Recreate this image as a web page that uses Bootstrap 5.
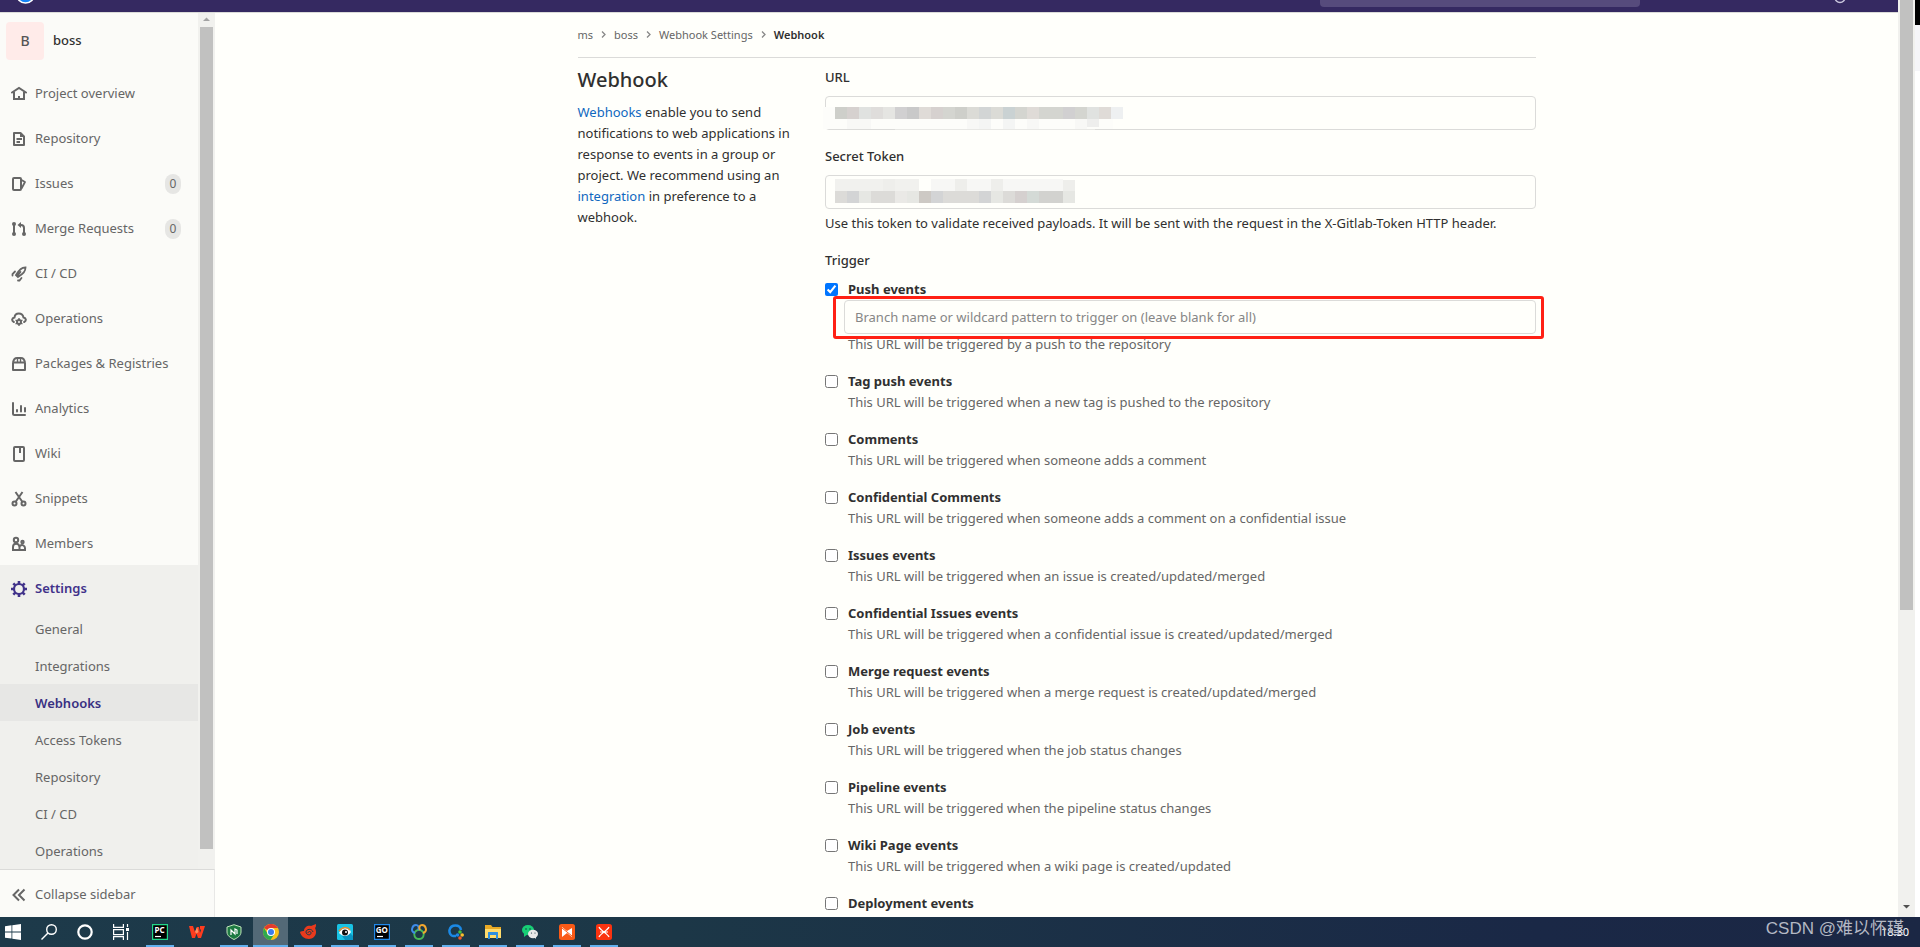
<!DOCTYPE html>
<html lang="en">
<head>
<meta charset="utf-8">
<meta name="viewport" content="width=device-width, initial-scale=1">
<title>Webhook · Settings · boss</title>
<link rel="stylesheet" href="https://cdn.jsdelivr.net/npm/bootstrap@5.3.0/dist/css/bootstrap.min.css">
<style>
:root{--line:#dbdbd9;--ink:#303030;--muted-ink:#666;--page:#fffffb;--side:#fbfbf8;--track:#f1f1ee;--thumb:#c1c1c0;--accent:#41328a}
body{font-family:"Noto Sans","Open Sans",sans-serif;font-size:13px;line-height:21px;color:var(--ink);background:var(--page)}
a{text-decoration:none}
.topbar{height:13px;background:#352961;border-bottom:1px solid var(--line)}
.search-box{width:320px;height:7px;margin-right:193px;border-radius:0 0 4px 4px;background:#564b7c}
.sidebar{width:215px;background:var(--side)}
.project-link{height:57px;padding:0 6px 2px;gap:9px;color:var(--ink);font-weight:500}
.project-mark{width:38px;height:38px;border-radius:4px;background:#ffebe9;color:#555;font-size:14px}
.side-link{height:45px;padding:2px 17px 0 11px;gap:8px;color:var(--muted-ink)}
.side-link svg,.collapse-btn svg{width:16px;height:16px;flex:none}
.count-pill{min-width:16px;height:20px;border-radius:10px;background:#e6e6e4;font-size:12px;line-height:20px;text-align:center;color:var(--muted-ink)}
.settings-group{background:#f0f0ed}
.settings-group .side-link{color:var(--accent);font-weight:600}
.sub-link{height:37px;padding:2px 0 0 35px;color:var(--muted-ink)}
.sub-link.current{background:#e7e7e5;color:#393082;font-weight:600}
.track{width:17px;background:var(--track)}
.track svg{width:17px;height:14px;flex:none}
.thumb{width:13px;background:var(--thumb)}
.side-thumb{height:97.6%}
.page-thumb{height:66.5%}
.collapse-btn{height:48px;padding:2px 11px 0;gap:8px;border:0;border-top:1px solid var(--line);border-right:1px solid #e8e8e6;background:var(--side);color:var(--muted-ink);text-align:left}
.content-wrap{max-width:990px;padding:0 16px}
.settings-row{--bs-gutter-x:32px}
.trail{height:45px;padding-bottom:2px;font-size:11px;gap:8px;border-bottom:1px solid var(--line)}
.trail a{color:var(--muted-ink)}
.trail svg{width:5px;height:7px}
.section-title{font-size:20px;line-height:24px;font-weight:500;margin:10px 0}
.intro a{color:#1068bf}
.form-side{padding-top:9px}
.field-label{font-weight:500;margin-bottom:8px}
.field{height:34px;padding:0 10px;border:1px solid var(--line);border-radius:4px;background:var(--page);font-size:13px;color:var(--ink)}
.field::placeholder{color:#868686;opacity:1}
.veil{position:absolute;top:10px;left:-2px}
.veil-inner{top:4px}
.event-row{gap:10px;margin-bottom:16px}
.event-row input[type=checkbox]{width:13px;height:13px;margin:4px 0 0;flex:none}
.event-row label{font-weight:700}
.event-note{color:var(--muted-ink)}
.branch-field{margin:0 0 0 -4px;width:calc(100% + 4px)}
.highlight{position:absolute;inset:-4px -8px -5px -15px;border:3px solid #ff2014;border-radius:3px;pointer-events:none}
.edge-strip{width:5px;background:#fff}
.edge-dark{height:25px;background:#000}
.edge-pale{height:46px;background:#f5f5f8}
.taskbar{height:30px;background:linear-gradient(90deg,#1d3a4a 0,#1c3747 35%,#1a2846 80%,#1b2744)}
.task-item{width:32px;height:30px;border:0;background:none;padding:2px 0 0;display:flex;align-items:center;justify-content:center;border-bottom:2px solid transparent}
.task-item svg{width:16px;height:16px}
.task-item.start{width:25px}
.task-item.app{width:28px;margin-left:9px}
.task-item.open{border-bottom-color:#62b0ee}
.task-item.active{width:35px;margin-left:5px;margin-right:-3px;background:#536977}
.clock{font-size:11px;color:#fff;right:11px;top:4px}
.watermark{font-family:"Liberation Sans","Noto Sans CJK SC",sans-serif;font-size:17px;color:#b4b8c3;right:16px;top:1px;white-space:nowrap}
</style>
</head>
<body class="vh-100 d-flex flex-column overflow-hidden">
<div class="d-flex flex-fill overflow-hidden">
  <div class="d-flex flex-column flex-fill overflow-hidden">
    <header class="topbar d-flex justify-content-between flex-shrink-0">
      <svg width="60" height="4" viewBox="0 0 60 4"><circle cx="25.500" cy="-6" r="9" fill="#1583f5" stroke="#fff" stroke-width="1.500"/></svg>
      <div class="d-flex">
        <div class="search-box"></div>
        <svg width="65" height="4" viewBox="0 0 65 4"><circle cx="7" cy="-2.500" r="5" fill="none" stroke="#c9c5dc" stroke-width="1.500"/></svg>
      </div>
    </header>
    <div class="d-flex flex-fill overflow-hidden">
      <aside class="sidebar d-flex flex-column flex-shrink-0">
        <div class="d-flex flex-fill overflow-hidden">
          <nav class="flex-fill" aria-label="Project">
            <a href="#" class="project-link d-flex align-items-center"><span class="project-mark d-flex align-items-center justify-content-center">B</span><span>boss</span></a>
            <a href="#" class="side-link d-flex align-items-center"><svg viewBox="0 0 16 16" fill="none" stroke="currentColor" stroke-width="2"><path d="M1 6.500 8 2l7 4.500" stroke-linecap="round"/><path d="M3 6v7h10V6M8 13v-3"/></svg>Project overview</a>
            <a href="#" class="side-link d-flex align-items-center"><svg viewBox="0 0 16 16" fill="none" stroke="currentColor" stroke-width="2"><path d="M3 2h6.500L13 5.500V14H3zM5.500 8H11M5.500 11H9" stroke-linejoin="round"/><path d="M9 2v4h4z" fill="currentColor" stroke="none"/></svg>Repository</a>
            <a href="#" class="side-link d-flex align-items-center"><svg viewBox="0 0 16 16" fill="none" stroke="currentColor" stroke-width="2"><rect x="2" y="2" width="8" height="12" rx="1"/><path d="m10.500 4 3.500 2-3.500 6.500" stroke-linejoin="round" stroke-width="1.800"/></svg>Issues<span class="count-pill ms-auto">0</span></a>
            <a href="#" class="side-link d-flex align-items-center"><svg viewBox="0 0 16 16" fill="none" stroke="currentColor" stroke-width="2"><path d="M3 3v10M13 13V7c0-2-1.500-3-3-3H9"/><path d="M10 1v6L6.500 4z" fill="currentColor" stroke="none"/><g fill="currentColor" stroke="none"><circle cx="3" cy="3" r="2"/><circle cx="3" cy="13" r="2"/><circle cx="13" cy="13" r="2"/></g></svg>Merge Requests<span class="count-pill ms-auto">0</span></a>
            <a href="#" class="side-link d-flex align-items-center"><svg viewBox="0 0 16 16" fill="none" stroke="currentColor" stroke-width="1.800" stroke-linecap="round"><path d="M14.500 1.500c-4 0-6 2-9.500 7.500L7 11c5.500-3.500 7.500-5.500 7.500-9.500zM7 9l2.500-3M4 5.500 1.500 8v1.500M10.500 12 8.500 14.500H7"/></svg>CI / CD</a>
            <a href="#" class="side-link d-flex align-items-center"><svg viewBox="0 0 16 16" fill="none" stroke="currentColor" stroke-width="2"><path d="M2.800 11C.5 10 .5 7 3.500 6.500 4 1.300 11.500 1.300 12.500 6.500c3 .5 3 3.500.7 4.500" stroke-linecap="round"/><circle cx="8" cy="11" r="2"/><path d="M8 7v2M8 13v2M4.500 9l1.800 1M9.700 12l1.800 1M4.500 13l1.800-1M9.700 10l1.800-1" stroke-width="1.400"/></svg>Operations</a>
            <a href="#" class="side-link d-flex align-items-center"><svg viewBox="0 0 16 16" fill="none" stroke="currentColor" stroke-width="2"><path d="M2 6.500h12V14H2zM2 6.500C2.500 4 4 2 6 2h4c2 0 3.500 2 4 4.500" stroke-linejoin="round"/><path d="M6.500 2.500v4M9.500 2.500v4" stroke-width="1.400"/></svg>Packages &amp; Registries</a>
            <a href="#" class="side-link d-flex align-items-center"><svg viewBox="0 0 16 16" fill="none" stroke="currentColor" stroke-width="2" stroke-linecap="round"><path d="M2 2v10.500c0 1 .5 1.500 1.500 1.500H14M6 9v1.500M10 5v5.500M14 7v3.500"/></svg>Analytics</a>
            <a href="#" class="side-link d-flex align-items-center"><svg viewBox="0 0 16 16" fill="none" stroke="currentColor" stroke-width="2"><rect x="3" y="1" width="10" height="14" rx="1"/><path d="M9 2v5"/></svg>Wiki</a>
            <a href="#" class="side-link d-flex align-items-center"><svg viewBox="0 0 16 16" fill="none" stroke="currentColor" stroke-width="2"><circle cx="3.500" cy="12.500" r="2"/><circle cx="12.500" cy="12.500" r="2"/><path d="M4.500 11 11.500 1M11.500 11 4.500 1"/></svg>Snippets</a>
            <a href="#" class="side-link d-flex align-items-center"><svg viewBox="0 0 16 16" fill="none" stroke="currentColor" stroke-width="2"><circle cx="5" cy="4" r="2.200"/><path d="M2 14v-3c0-4.500 6-4.500 6.500 0v3zM8.500 14H14v-2c0-2.500-3-4-5-2"/><circle cx="11.500" cy="6" r="1.200"/></svg>Members</a>
            <div class="settings-group">
              <a href="#" class="side-link d-flex align-items-center"><svg viewBox="0 0 16 16" fill="none" stroke="currentColor"><circle cx="8" cy="8" r="5" stroke-width="2.200"/><path d="M8 0v3M8 13v3M0 8h3M13 8h3M2.300 2.300l2 2M11.700 11.700l2 2M2.300 13.700l2-2M11.700 4.300l2-2" stroke-width="2.600"/></svg>Settings</a>
              <a href="#" class="sub-link d-flex align-items-center">General</a>
              <a href="#" class="sub-link d-flex align-items-center">Integrations</a>
              <a href="#" class="sub-link current d-flex align-items-center" aria-current="page">Webhooks</a>
              <a href="#" class="sub-link d-flex align-items-center">Access Tokens</a>
              <a href="#" class="sub-link d-flex align-items-center">Repository</a>
              <a href="#" class="sub-link d-flex align-items-center">CI / CD</a>
              <a href="#" class="sub-link d-flex align-items-center">Operations</a>
            </div>
          </nav>
          <div class="track d-flex flex-column align-items-center">
            <svg viewBox="0 0 17 14"><path d="M5 8h7L8.500 4.500z" fill="#a3a3a3"/></svg>
            <div class="flex-fill w-100 d-flex justify-content-center"><div class="thumb side-thumb"></div></div>
          </div>
        </div>
        <button type="button" class="collapse-btn d-flex align-items-center flex-shrink-0"><svg viewBox="0 0 16 16" fill="none" stroke="currentColor" stroke-width="2"><path d="M8 2.500 2.500 8 8 13.500M13.500 2.500 8 8l5.500 5.500"/></svg>Collapse sidebar</button>
      </aside>
      <main class="flex-fill overflow-hidden">
        <div class="content-wrap mx-auto">
          <nav class="trail d-flex align-items-center" aria-label="Breadcrumb">
            <a href="#">ms</a><svg viewBox="0 0 5 7" fill="none" stroke="#888" stroke-width="1.300"><path d="m1 .5 3 3-3 3"/></svg>
            <a href="#">boss</a><svg viewBox="0 0 5 7" fill="none" stroke="#888" stroke-width="1.300"><path d="m1 .5 3 3-3 3"/></svg>
            <a href="#">Webhook Settings</a><svg viewBox="0 0 5 7" fill="none" stroke="#888" stroke-width="1.300"><path d="m1 .5 3 3-3 3"/></svg>
            <span class="fw-semibold">Webhook</span>
          </nav>
          <div class="row settings-row">
            <div class="col-3">
              <h1 class="section-title">Webhook</h1>
              <p class="intro m-0"><a href="#">Webhooks</a> enable you to send notifications to web applications in response to events in a group or project. We recommend using an <a href="#">integration</a> in preference to a webhook.</p>
            </div>
            <form class="col-9 form-side">
              <label class="field-label d-block" for="url">URL</label>
              <div class="position-relative mb-3">
                <input id="url" type="text" class="field w-100 d-block">
                <svg class="veil" width="320" height="24" viewBox="0 0 320 24" shape-rendering="crispEdges" aria-hidden="true"><path fill="#fdfdfa" d="M0 1h290v22H0z"/>
                  <path fill="#cecfca" d="M12 1h12v12H12zM132 1h12v12h-12z"/><path fill="#d6d1cf" d="M24 1h12v12H24zM108 1h12v12h-12z"/><path fill="#e0e2e0" d="M36 1h12v12H36zM264 1h12v12h-12z"/><path fill="#dfdddb" d="M48 1h12v12H48z"/><path fill="#e5e5e2" d="M60 1h12v12H60z"/><path fill="#d1d0d1" d="M72 1h12v12H72zM240 1h12v12h-12z"/><path fill="#c9c9c9" d="M84 1h12v12H84z"/><path fill="#dfdbd7" d="M96 1h12v12H96zM204 1h12v12h-12zM276 1h12v12h-12z"/><path fill="#d4d5d0" d="M120 1h12v12h-12zM192 1h12v12h-12zM216 1h24v12h-24zM252 1h12v12h-12z"/><path fill="#dbdbd6" d="M144 1h12v12h-12zM168 1h12v12h-12z"/><path fill="#d2d5d5" d="M156 1h12v12h-12z"/><path fill="#cad2d3" d="M180 1h12v12h-12z"/><path fill="#eef0f1" d="M288 1h12v12h-12z"/><path fill="#f8f8f6" d="M24 13h24v10H24zM144 13h12v10h-12zM204 13h12v10h-12zM252 13h12v10h-12z"/><path fill="#f4f5f4" d="M156 13h12v10h-12zM180 13h12v10h-12z"/><path fill="#eeeeed" d="M264 13h12v8h-12z"/><path fill="#e8e8e5" d="M72 23h200v1H72z"/></svg>
              </div>
              <label class="field-label d-block" for="token">Secret Token</label>
              <div class="position-relative mb-1">
                <input id="token" type="text" class="field w-100 d-block">
                <svg class="veil veil-inner" width="320" height="24" viewBox="0 0 320 24" shape-rendering="crispEdges" aria-hidden="true">
                  <path fill="#f1f1ee" d="M12 0h84v12H12z"/><path fill="#f7f7f5" d="M108 0h132v12H108z"/><path fill="#eeeeeb" d="M60 0h12v12H60zM132 0h12v12h-12zM168 0h12v12h-12zM240 1h12v11h-12z"/><path fill="#dcdbd8" d="M12 12h240v12H12z"/><path fill="#d3d4d5" d="M24 12h12v12H24zM108 12h12v12h-12zM156 12h12v12h-12z"/><path fill="#e6e7e3" d="M36 12h12v12H36zM84 12h12v12H84zM168 12h12v12h-12zM240 12h12v12h-12z"/><path fill="#eae9e6" d="M72 12h12v12H72z"/><path fill="#cdc9c4" d="M96 12h12v12H96z"/><path fill="#d5d0cf" d="M192 12h12v12h-12z"/><path fill="#d4dad6" d="M204 12h12v12h-12z"/><path fill="#d2d2cf" d="M216 12h24v12h-24z"/></svg>
              </div>
              <div class="mb-3">Use this token to validate received payloads. It will be sent with the request in the X-Gitlab-Token HTTP header.</div>
              <div class="field-label">Trigger</div>
              <div class="event-row d-flex"><input type="checkbox" id="ev0" checked>
                <div class="flex-fill"><label for="ev0" class="d-block">Push events</label>
                  <div class="position-relative"><input type="text" class="field branch-field d-block" aria-label="Branch filter" placeholder="Branch name or wildcard pattern to trigger on (leave blank for all)"><div class="highlight"></div></div>
                  <div class="event-note">This URL will be triggered by a push to the repository</div></div></div>
              <div class="event-row d-flex"><input type="checkbox" id="ev1"><div><label for="ev1" class="d-block">Tag push events</label><div class="event-note">This URL will be triggered when a new tag is pushed to the repository</div></div></div>
              <div class="event-row d-flex"><input type="checkbox" id="ev2"><div><label for="ev2" class="d-block">Comments</label><div class="event-note">This URL will be triggered when someone adds a comment</div></div></div>
              <div class="event-row d-flex"><input type="checkbox" id="ev3"><div><label for="ev3" class="d-block">Confidential Comments</label><div class="event-note">This URL will be triggered when someone adds a comment on a confidential issue</div></div></div>
              <div class="event-row d-flex"><input type="checkbox" id="ev4"><div><label for="ev4" class="d-block">Issues events</label><div class="event-note">This URL will be triggered when an issue is created/updated/merged</div></div></div>
              <div class="event-row d-flex"><input type="checkbox" id="ev5"><div><label for="ev5" class="d-block">Confidential Issues events</label><div class="event-note">This URL will be triggered when a confidential issue is created/updated/merged</div></div></div>
              <div class="event-row d-flex"><input type="checkbox" id="ev6"><div><label for="ev6" class="d-block">Merge request events</label><div class="event-note">This URL will be triggered when a merge request is created/updated/merged</div></div></div>
              <div class="event-row d-flex"><input type="checkbox" id="ev7"><div><label for="ev7" class="d-block">Job events</label><div class="event-note">This URL will be triggered when the job status changes</div></div></div>
              <div class="event-row d-flex"><input type="checkbox" id="ev8"><div><label for="ev8" class="d-block">Pipeline events</label><div class="event-note">This URL will be triggered when the pipeline status changes</div></div></div>
              <div class="event-row d-flex"><input type="checkbox" id="ev9"><div><label for="ev9" class="d-block">Wiki Page events</label><div class="event-note">This URL will be triggered when a wiki page is created/updated</div></div></div>
              <div class="event-row d-flex"><input type="checkbox" id="ev10"><div><label for="ev10" class="d-block">Deployment events</label></div></div>
            </form>
          </div>
        </div>
      </main>
    </div>
  </div>
  <div class="track d-flex flex-column align-items-center flex-shrink-0">
    <div class="thumb page-thumb"></div>
    <svg class="mt-auto mb-1" viewBox="0 0 17 14"><path d="M5 6h7L8.500 9.500z" fill="#505050"/></svg>
  </div>
  <div class="edge-strip flex-shrink-0"><div class="edge-dark"></div><div class="edge-pale"></div></div>
</div>
<footer class="taskbar d-flex flex-shrink-0 position-relative">
  <button class="task-item start" aria-label="Start"><svg viewBox="0 0 16 16" fill="#fff"><path d="M0 2.200 6.500 1.300v6.200H0zM7.300 1.200 16 0v7.500H7.300zM0 8.400h6.500v6.200L0 13.700zM7.300 8.400H16V16l-8.700-1.200z"/></svg></button>
  <button class="task-item ms-2" aria-label="Search"><svg viewBox="0 0 16 16" fill="none" stroke="#fff" stroke-width="1.400"><circle cx="10.500" cy="5.500" r="4.800"/><path d="M7 9 .5 15.500"/></svg></button>
  <button class="task-item ms-1" aria-label="Cortana"><svg viewBox="0 0 16 16" fill="none" stroke="#fff" stroke-width="2.200"><circle cx="8" cy="8" r="6.700"/></svg></button>
  <button class="task-item ms-1" aria-label="Task view"><svg viewBox="0 0 16 16" fill="none" stroke="#fff" stroke-width="1.200"><path d="M.6 0v3.400h9.800V0M.6 16v-3.400h9.800V16M.6 5.600h9.800v5H.6zM14.500 0v3M14.500 8v8"/><path d="M13 4h3v3h-3z" fill="#fff" stroke="none"/></svg></button>
  <button class="task-item app open" aria-label="PyCharm"><svg viewBox="0 0 16 16"><path fill="#000" stroke="#21d789" stroke-width="1.200" d="M.6.6h14.800v14.800H.6z"/><path d="M3 12.500h6" stroke="#fff" stroke-width="1.200"/><text x="2.500" y="8.800" font-size="8" font-weight="700" fill="#fff">PC</text></svg></button>
  <button class="task-item app" aria-label="WPS"><svg viewBox="0 0 16 16"><path fill="#ff3c1e" d="M0 2h4l2 6 2-5h2l1 6 1-3-1-1V2h5l-4 12H9L7.500 9.500 6 14H3z"/><path fill="#ff9060" d="m8 3 1.500 5-2 1.500L6 8z"/></svg></button>
  <button class="task-item app open" aria-label="Security"><svg viewBox="0 0 16 16"><path fill="#1e7a42" stroke="#c3e8bd" d="M8 .7 15 3v5c0 4-4 6-7 7.500C5 14 1 12 1 8V3z"/><path d="M5 11V6l4 4V5l2 1v4" stroke="#fff" stroke-width="1.200" fill="none"/></svg></button>
  <button class="task-item app open active" aria-label="Chrome"><svg viewBox="0 0 16 16"><circle cx="8" cy="8" r="8" fill="#fbc116"/><path fill="#e33b2e" d="M8 8 1.100 4A8 8 0 0 1 15 4H8z"/><path fill="#2da94f" d="M1.100 4A8 8 0 0 0 7.500 16l4-6-6 1z"/><circle cx="8" cy="8" r="4" fill="#fff"/><circle cx="8" cy="8" r="3" fill="#3b7ded"/></svg></button>
  <button class="task-item app open" aria-label="Navicat"><svg viewBox="0 0 16 16"><path fill="#e93a1d" d="M0 8c1-1 3-1 4-1 0-4 4-6 7-5l5-2c0 2 0 3-1 4 3 6-1 11-6 11-5 0-8-3-9-7z"/><path d="M13 8c-1-4-7-3-7 0s5 4 5 1c0-2-3-2-3 0" fill="none" stroke="#1d3a4a"/></svg></button>
  <button class="task-item app open" aria-label="Viewer"><svg viewBox="0 0 16 16"><rect width="16" height="16" rx="1.500" fill="#18c3e5"/><path fill="#0b95c2" d="m13 9 3 3v4H8L5 12z"/><path fill="#fff" d="M2 9c3-6 9-6 12-1-3 5-8 5-12 1z"/><circle cx="8" cy="8.500" r="3" fill="#111"/><path d="M2 7c3-4 8-5 11-1" stroke="#f08b2a" stroke-width="1.500" fill="none"/><circle cx="9" cy="8" r="1" fill="#fff"/></svg></button>
  <button class="task-item app open" aria-label="GoLand"><svg viewBox="0 0 16 16"><path fill="#000" stroke="#2189ea" stroke-width="1.200" d="M.6.6h14.800v14.800H.6z"/><path d="M3 12.500h6" stroke="#fff" stroke-width="1.200"/><text x="1.800" y="8.800" font-size="8" font-weight="700" fill="#fff">GO</text></svg></button>
  <button class="task-item app open" aria-label="Studio"><svg viewBox="0 0 16 16" fill="none" stroke-width="2"><path d="M4 8c-2 3 0 7 4 7s6-4 4-7c-2-3-6-3-8 0z" stroke="#47b957"/><path d="M4 9C-1 8 1 1 5 1c3 0 3 3 2 5" stroke="#3d8bea"/><path d="M12 9c5-1 3-8-1-8-3 0-3 3-2 5" stroke="#f3a72e"/></svg></button>
  <button class="task-item app open" aria-label="WeCom"><svg viewBox="0 0 16 16"><path d="M13 6C12 0 3 0 1.500 6 1 9 3 12 5 12l3 0" fill="none" stroke="#1b89e5" stroke-width="2.500"/><circle cx="12" cy="8" r="1.800" fill="#42bd43"/><circle cx="9.500" cy="11" r="1.800" fill="#2086e5"/><circle cx="14.200" cy="11" r="1.800" fill="#fac02c"/><circle cx="12" cy="14" r="1.800" fill="#ef5a29"/></svg></button>
  <button class="task-item app open" aria-label="File Explorer"><svg viewBox="0 0 16 16"><path fill="#e9aa25" d="M0 1h6l1.500 2H16v11H0z"/><path fill="#ffdb6b" d="M0 5h16v9H0z"/><path fill="#2e8fe0" d="M3 9c0-1 0-1 1-1h8c1 0 1 0 1 1v6h-2v-4H5v4H3z"/></svg></button>
  <button class="task-item app open" aria-label="WeChat"><svg viewBox="0 0 16 16"><ellipse cx="6" cy="6" rx="6" ry="5" fill="#17cf76"/><path fill="#17cf76" d="m2 9 0 4 4-3z"/><ellipse cx="11" cy="10" rx="5" ry="4.200" fill="#e8e8e8"/><path fill="#e8e8e8" d="m12 13 2 2v-3z"/><g fill="#1b3a45"><circle cx="4" cy="5" r=".8"/><circle cx="8" cy="5" r=".8"/><circle cx="9.500" cy="9" r=".6"/><circle cx="13" cy="9" r=".6"/></g></svg></button>
  <button class="task-item app open" aria-label="Recorder"><svg viewBox="0 0 16 16"><rect width="16" height="16" rx="2.500" fill="#fa5a16"/><path fill="#fff" d="m3 3 5 4 5-3v9L8 9l-5 4z"/><path stroke="#fa5a16" d="m3 4 10 8"/></svg></button>
  <button class="task-item app open" aria-label="XMind"><svg viewBox="0 0 16 16"><rect width="16" height="16" rx="2.500" fill="#fb3310"/><path d="M3 3c1 3 9 7 10 10M13 3c-1 3-9 7-10 10M4 8h8" fill="none" stroke="#fff" stroke-width="1.200"/></svg></button>
  <span class="clock position-absolute">18:30</span>
  <span class="watermark position-absolute">CSDN @难以怀瑾</span>
</footer>
<script src="https://cdn.jsdelivr.net/npm/bootstrap@5.3.0/dist/js/bootstrap.bundle.min.js"></script>
</body>
</html>
